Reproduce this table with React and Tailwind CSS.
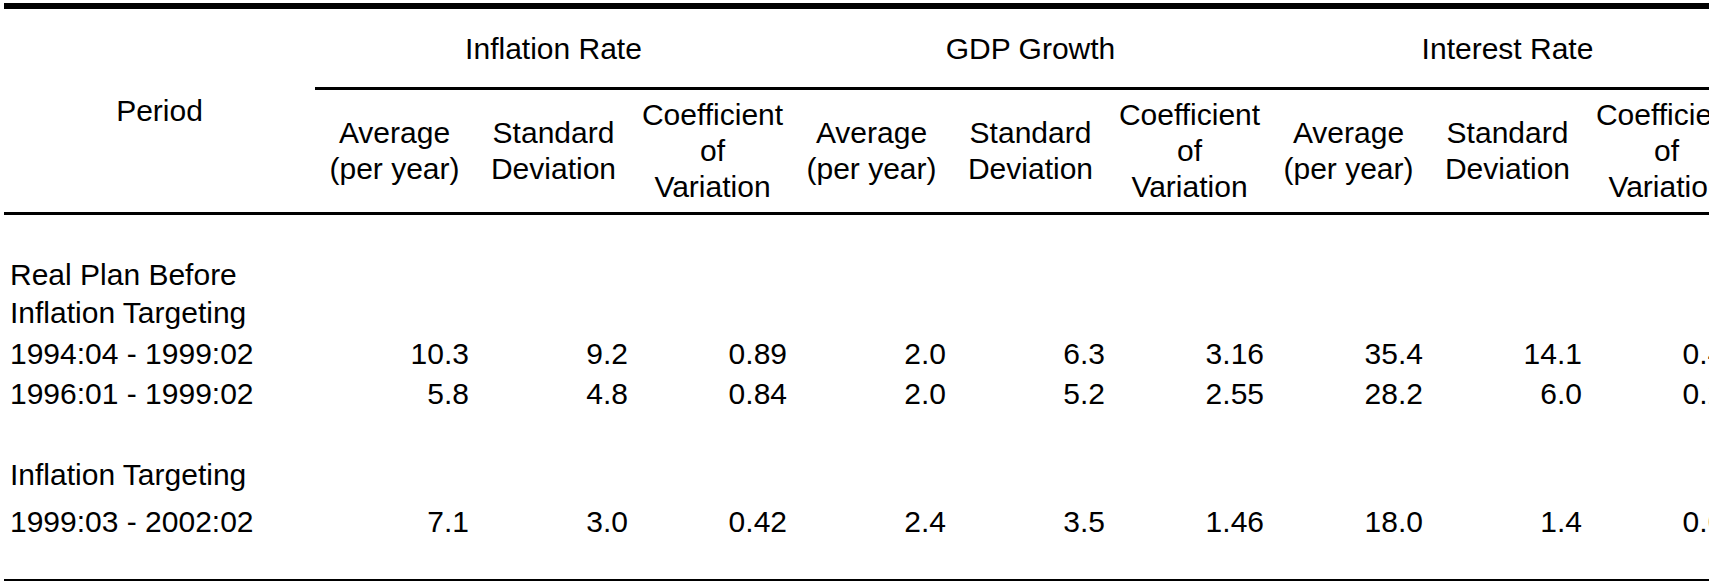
import React from "react";

const rows1 = [
  { label: "1994:04 - 1999:02", vals: ["10.3", "9.2", "0.89", "2.0", "6.3", "3.16", "35.4", "14.1", "0.40"] },
  { label: "1996:01 - 1999:02", vals: ["5.8", "4.8", "0.84", "2.0", "5.2", "2.55", "28.2", "6.0", "0.21"] },
];
const rows2 = [
  { label: "1999:03 - 2002:02", vals: ["7.1", "3.0", "0.42", "2.4", "3.5", "1.46", "18.0", "1.4", "0.08"] },
];

const groups = ["Inflation Rate", "GDP Growth", "Interest Rate"];

function SubHeaders() {
  const cells = [];
  for (let g = 0; g < 3; g++) {
    cells.push(
      <div key={g + "a"} className="flex items-center justify-center text-center">
        <div>Average<br />(per year)</div>
      </div>,
      <div key={g + "b"} className="flex items-center justify-center text-center">
        <div>Standard<br />Deviation</div>
      </div>,
      <div key={g + "c"} className="flex items-center justify-center text-center">
        <div>Coefficient<br />of<br />Variation</div>
      </div>
    );
  }
  return <div className="grid grid-cols-[repeat(9,159px)] h-[122px] leading-[36px]">{cells}</div>;
}

function DataRow({ label, vals }) {
  return (
    <div className="grid grid-cols-[311px_repeat(9,159px)] h-[40px] leading-[40px]">
      <div className="pl-[6px] whitespace-nowrap">{label}</div>
      {vals.map((v, i) => (
        <div key={i} className="text-right pr-[5px]">{v}</div>
      ))}
    </div>
  );
}

export default function App() {
  return (
    <div className="w-[1709px] h-[581px] overflow-hidden bg-white text-black font-['Liberation_Sans',Arial,sans-serif] text-[30px]">
      <div className="w-[1742px] ml-[4px] mt-[3px] border-t-[6px] border-black">
        {/* header */}
        <div className="flex h-[206px] border-b-[3px] border-black">
          <div className="w-[311px] flex items-center justify-center">Period</div>
          <div className="w-[1431px] flex flex-col">
            <div className="grid grid-cols-3 h-[81px] border-b-[3px] border-black">
              {groups.map((g) => (
                <div key={g} className="flex items-center justify-center">{g}</div>
              ))}
            </div>
            <SubHeaders />
          </div>
        </div>
        {/* body */}
        <div className="flex flex-col h-[366px] border-b-[2px] border-black">
          <div className="h-[41px]" />
          <div className="h-[38px] leading-[38px] pl-[6px]">Real Plan Before</div>
          <div className="h-[40px] leading-[38px] pl-[6px]">Inflation Targeting</div>
          {rows1.map((r) => (
            <DataRow key={r.label} {...r} />
          ))}
          <div className="h-[41px]" />
          <div className="h-[47px] leading-[40px] pl-[6px]">Inflation Targeting</div>
          {rows2.map((r) => (
            <DataRow key={r.label} {...r} />
          ))}
          <div className="h-[37px]" />
        </div>
      </div>
    </div>
  );
}
